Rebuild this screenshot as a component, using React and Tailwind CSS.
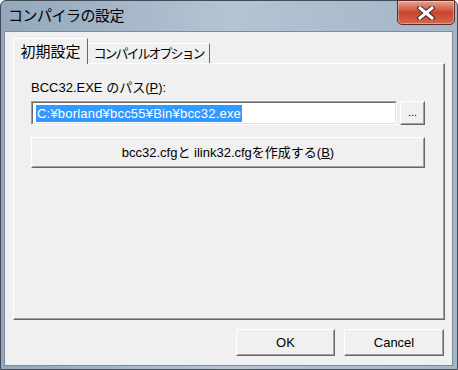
import React from "react";

const font = "[font-family:'Liberation_Sans','Noto_Sans_CJK_JP',sans-serif]";

// classic raised 3D button border
function Btn({ className = "", children }) {
    return (
        <div className={`border border-t-white border-l-white border-r-[#696969] border-b-[#696969] bg-[#f0f0f0] ${className}`}>
            <div className="w-full h-full border border-t-[#f0f0f0] border-l-[#f0f0f0] border-r-[#a0a0a0] border-b-[#a0a0a0] flex items-center justify-center">
                {children}
            </div>
        </div>
    );
}

function CloseIcon() {
    return (
        <svg width="20" height="14" viewBox="0 0 20 14">
            <path d="M4 2 L16 12 M16 2 L4 12" stroke="#3b2a28" strokeWidth="5" strokeLinecap="square" />
            <path d="M4 2 L16 12 M16 2 L4 12" stroke="#ffffff" strokeWidth="3" strokeLinecap="square" />
        </svg>
    );
}

export default function App() {
    return (
        <div className={`w-[458px] h-[370px] ${font} text-black text-[13px]`}>
            <div className="w-full h-full flex flex-col border border-[#414c58] rounded-t-[6px] bg-gradient-to-r from-[#93a8bc] via-[#b4c4d3] to-[#a3b5c7] pl-[3px] pr-[4px] pb-[3px]">
                {/* title bar */}
                <div className="h-[30px] flex items-start justify-between">
                    <div className="pl-[4px] pt-[4px] text-[15px] text-black whitespace-nowrap tracking-[-0.5px]">コンパイラの設定</div>
                    <div className="w-[58px] h-[25px] -mt-px mr-[-2px] rounded-b-[5px] border border-[#5e2a24] bg-gradient-to-b from-[#e8a293] via-[#c9442c] to-[#d4674f] flex items-center justify-center shadow-[inset_0_0_0_1px_rgba(255,255,255,0.35)]">
                        <CloseIcon />
                    </div>
                </div>
                {/* client */}
                <div className="flex-1 bg-[#f0f0f0] border border-[#7d8c9b] flex flex-col pl-[8px] pr-[7px] pt-[6px]">
                    {/* tabs */}
                    <div className="flex items-end h-[26px] relative z-10">
                        <div className="w-[75px] h-[26px] border-l border-t border-r border-l-white border-t-white border-r-[#696969] bg-[#f0f0f0] flex items-center justify-center pt-[1px] text-[15px] whitespace-nowrap">
                            初期設定
                        </div>
                        <div className="w-[122px] h-[20px] border-t border-r border-t-white border-r-[#696969] flex items-center justify-center text-[13px] tracking-[-2px] whitespace-nowrap mb-px">
                            コンパイルオプション
                        </div>
                    </div>
                    {/* panel */}
                    <div className="w-[432px] h-[257px] -mt-px border border-l-white border-t-white border-r-[#696969] border-b-[#696969]">
                        <div className="w-full h-full border-r border-b border-r-[#a0a0a0] border-b-[#a0a0a0] pl-[17px] pt-[16px]">
                            <div className="h-[16px] leading-[16px] whitespace-nowrap">
                                BCC32.EXE のパス(<span className="underline">P</span>):
                            </div>
                            <div className="flex mt-[5px] gap-[3px]">
                                <div className="w-[366px] h-[24px] border border-t-[#a0a0a0] border-l-[#a0a0a0] border-r-white border-b-white bg-white">
                                    <div className="w-full h-full border border-t-[#696969] border-l-[#696969] border-r-[#e3e3e3] border-b-[#e3e3e3] flex items-center pl-[3px]">
                                        <span className="bg-[#3399ff] text-white leading-[17px] px-px tracking-[0.2px] whitespace-nowrap">C:¥borland¥bcc55¥Bin¥bcc32.exe</span>
                                    </div>
                                </div>
                                <Btn className="w-[25px] h-[24px]">
                                    <span className="text-[11px] leading-none -mt-[2px]">...</span>
                                </Btn>
                            </div>
                            <Btn className="w-[394px] h-[31px] mt-[12px]">
                                <span className="whitespace-nowrap">bcc32.cfgと ilink32.cfgを作成する(<span className="underline">B</span>)</span>
                            </Btn>
                        </div>
                    </div>
                    {/* dialog buttons */}
                    <div className="flex justify-end gap-[9px] mt-[9px] pr-[1px]">
                        <Btn className="w-[99px] h-[27px]">OK</Btn>
                        <Btn className="w-[100px] h-[27px]">Cancel</Btn>
                    </div>
                </div>
            </div>
        </div>
    );
}
